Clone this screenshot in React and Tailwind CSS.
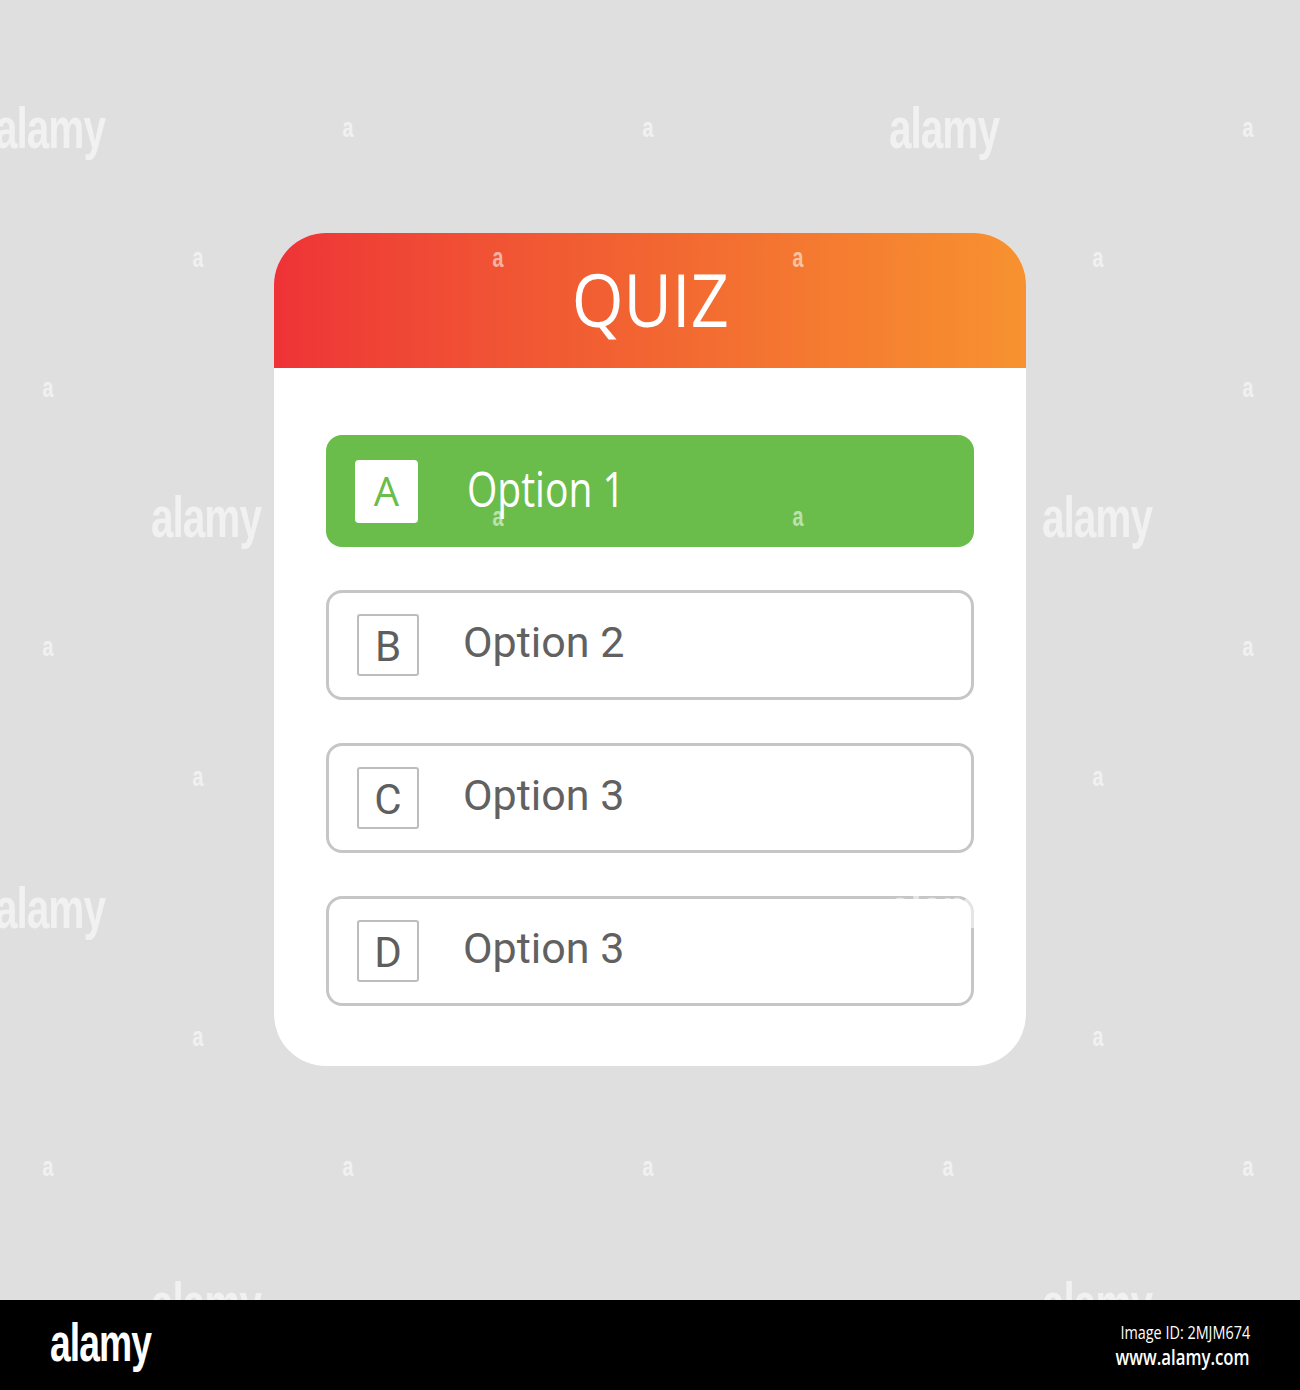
const options = [
  { letter: "B", label: "Option 2" },
  { letter: "C", label: "Option 3" },
  { letter: "D", label: "Option 3" },
];

const bigMarks = [
  [50, 128], [944, 128], [206, 517], [1097, 517],
  [50, 908], [944, 908], [206, 1303], [1097, 1303],
];

const smallMarks = [
  [348, 128], [648, 128], [1248, 128],
  [198, 258], [498, 258], [798, 258], [1098, 258],
  [48, 388], [1248, 388],
  [498, 517], [798, 517],
  [48, 647], [1248, 647],
  [198, 777], [1098, 777],
  [198, 1037], [1098, 1037],
  [48, 1167], [348, 1167], [648, 1167], [948, 1167], [1248, 1167],
];

function Watermarks() {
  return (
    <div className="absolute inset-0 pointer-events-none font-['Liberation_Sans',sans-serif] font-bold text-white/55">
      {bigMarks.map(([x, y], i) => (
        <span
          key={"b" + i}
          className="absolute -translate-x-1/2 -translate-y-1/2 text-[58px] leading-none tracking-tight scale-x-[0.7]"
          style={{ left: x, top: y }}
        >
          alamy
        </span>
      ))}
      {smallMarks.map(([x, y], i) => (
        <span
          key={"s" + i}
          className="absolute -translate-x-1/2 -translate-y-1/2 text-[28px] leading-none scale-x-[0.7]"
          style={{ left: x, top: y }}
        >
          a
        </span>
      ))}
    </div>
  );
}

export default function App() {
  return (
    <div className="w-[1300px] h-[1390px] flex flex-col">
      <div className="relative h-[1300px] overflow-hidden bg-[#dfdfdf] pt-[233px]">
        <div className="mx-auto w-[752px] h-[833px] rounded-[52px] bg-white overflow-hidden flex flex-col">
          <div className="h-[135px] bg-gradient-to-r from-[#ee3237] via-[#f26531] to-[#f7922f] flex items-center justify-center">
            <span className="font-['Open_Sans',sans-serif] text-white text-[74px] leading-none scale-x-[0.9] -mt-[4px]">
              QUIZ
            </span>
          </div>
          <div className="flex flex-col px-[52px] pt-[67px] gap-[43px]">
            <div className="h-[112px] rounded-[16px] bg-[#6abd4b] flex items-center pl-[29px]">
              <div className="w-[63px] h-[63px] rounded-[4px] bg-white flex items-center justify-center font-['Open_Sans',sans-serif] text-[#6abd4b] text-[40px] leading-none">
                A
              </div>
              <span className="ml-[49px] origin-left scale-x-[0.78] font-['Open_Sans',sans-serif] text-white text-[50px] leading-none -mt-[6px]">
                Option 1
              </span>
            </div>
            {options.map((o) => (
              <div
                key={o.letter}
                className="h-[110px] rounded-[16px] border-[3px] border-[#c6c6c6] bg-white flex items-center pl-[28px]"
              >
                <div className="w-[62px] h-[62px] rounded-[3px] border-[2.5px] border-[#bdbdbd] flex items-center justify-center font-['Roboto',sans-serif] text-[#5e5e5e] text-[42px] leading-none pt-[3px]">
                  {o.letter}
                </div>
                <span className="ml-[44px] font-['Roboto',sans-serif] text-[#616161] text-[43px] leading-none -mt-[6px]">
                  {o.label}
                </span>
              </div>
            ))}
          </div>
        </div>
        <Watermarks />
      </div>
      <div className="h-[90px] bg-black flex items-center justify-between pl-[50px] pr-[50px]">
        <span className="origin-left scale-x-[0.69] font-['Liberation_Sans',sans-serif] font-bold text-white text-[54px] leading-none tracking-tight -mt-[6px]">
          alamy
        </span>
        <div className="flex flex-col items-end gap-[6px] font-['Open_Sans',sans-serif] text-white leading-none">
          <span className="origin-right scale-x-[0.8] text-[18px]">Image ID: 2MJM674</span>
          <span className="origin-right scale-x-[0.8] text-[21px] font-semibold">www.alamy.com</span>
        </div>
      </div>
    </div>
  );
}
